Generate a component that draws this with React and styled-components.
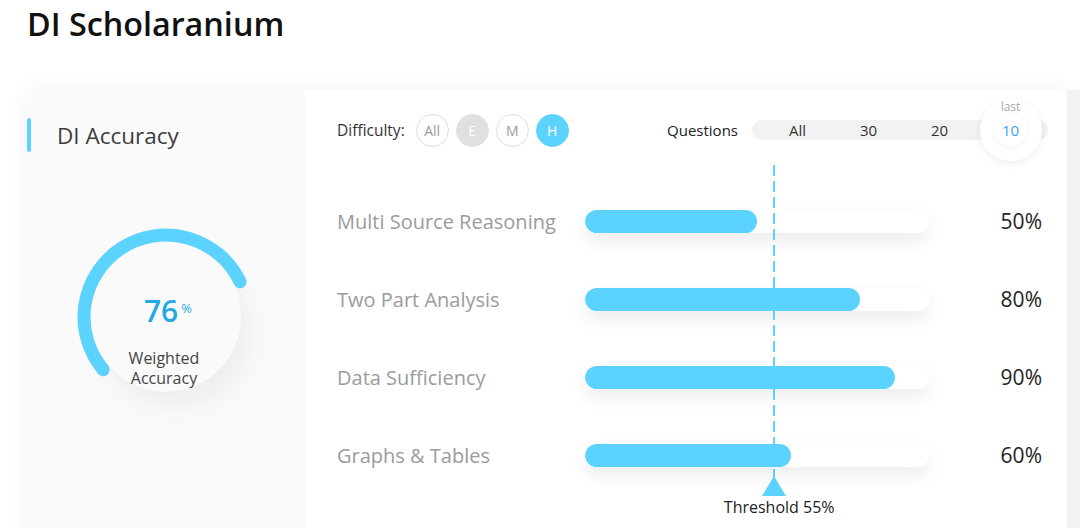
import React from 'react'
import styled, { createGlobalStyle } from 'styled-components'

const GlobalStyle = createGlobalStyle`
  body {
    margin: 0;
    background: #ffffff;
    font-family: 'Open Sans', 'Noto Sans', sans-serif;
    overflow: hidden;
  }
`

const BLUE = '#5cd3ff'
const DEEP_BLUE = '#27a8e6'

const Page = styled.div`
  width: 1080px;
  height: 528px;
  overflow: hidden;
`

const Heading = styled.h1`
  margin: 0;
  padding: 1px 0 0 27px;
  height: 90px;
  box-sizing: border-box;
  font-size: 32.3px;
  font-weight: 600;
  color: #111;
`

const Deck = styled.div`
  display: flex;
  padding-left: 27px;
`

const Card = styled.div`
  display: flex;
  width: 1040px;
  height: 460px;
  border-radius: 12px;
  overflow: hidden;
  background: #fff;
  box-shadow: 0 0 24px rgba(0, 0, 0, 0.06);
  flex-shrink: 0;
`

const NextCard = styled.div`
  width: 300px;
  height: 460px;
  background: #f2f2f2;
  flex-shrink: 0;
`

const LeftPanel = styled.div`
  width: 278px;
  background: #fafafa;
  display: flex;
  flex-direction: column;
  align-items: center;
  padding-top: 28px;
  box-sizing: border-box;
`

const PanelTitle = styled.div`
  align-self: stretch;
  display: flex;
  align-items: center;
  height: 34px;
  font-size: 22.5px;
  color: #3d3d3d;
  &::before {
    content: '';
    width: 4px;
    height: 34px;
    border-radius: 2px;
    background: ${BLUE};
    margin-right: 26px;
  }
`

const GaugeWrap = styled.div`
  position: relative;
  width: 190px;
  height: 190px;
  margin-top: 70px;
  display: flex;
  align-items: flex-start;
  justify-content: center;
`

const GaugeDisc = styled.div`
  position: absolute;
  left: 20px;
  top: 20px;
  width: 150px;
  height: 150px;
  border-radius: 50%;
  background: #fafafa;
  box-shadow: 10px 16px 28px rgba(0, 0, 0, 0.05), -4px -4px 16px rgba(0, 0, 0, 0.02);
`

const GaugeSvg = styled.svg`
  position: absolute;
  inset: 0;
`

const GaugeText = styled.div`
  position: relative;
  display: flex;
  flex-direction: column;
  align-items: center;
  padding-top: 74px;
  margin-left: -4px;
`

const Value = styled.div`
  font-size: 30px;
  font-weight: 600;
  color: ${DEEP_BLUE};
  line-height: 30px;
  margin-left: 8px;
  sup {
    font-size: 13px;
    font-weight: 400;
    vertical-align: top;
    position: relative;
    top: -3px;
    margin-left: 3px;
  }
`

const Caption = styled.div`
  margin-top: 22px;
  font-size: 16px;
  line-height: 20px;
  color: #444;
  text-align: center;
`

const RightPanel = styled.div`
  flex: 1;
  padding: 23px 25px 0 32px;
  box-sizing: border-box;
`

const Toolbar = styled.div`
  display: flex;
  align-items: center;
  justify-content: space-between;
  height: 34px;
  margin-right: -6px;
`

const Group = styled.div`
  display: flex;
  align-items: center;
`

const ToolLabel = styled.span`
  font-size: ${(p) => p.size}px;
  color: ${(p) => (p.dark ? '#222' : '#333')};
  margin-right: ${(p) => p.gap}px;
`

const Pill = styled.div`
  width: 33px;
  height: 33px;
  box-sizing: border-box;
  border-radius: 50%;
  display: flex;
  align-items: center;
  justify-content: center;
  font-size: 14px;
  margin-right: 7px;
  border: 1px solid ${(p) => (p.bg ? p.bg : '#dddddd')};
  background: ${(p) => p.bg || '#fff'};
  color: ${(p) => (p.bg ? '#fff' : '#9a9a9a')};
`

const Segments = styled.div`
  display: flex;
  height: 20px;
  width: 296px;
  box-sizing: border-box;
  padding: 0 2px 0 10px;
  border-radius: 10px;
  background: #f2f2f2;
`

const Segment = styled.div`
  position: relative;
  width: 71px;
  display: flex;
  align-items: center;
  justify-content: center;
  font-size: 15px;
  color: ${(p) => (p.active ? '#3aa6ee' : '#333')};
`

const Halo = styled.div`
  position: absolute;
  left: 50%;
  top: 50%;
  width: 62px;
  height: 62px;
  margin: -31px 0 0 -31px;
  border-radius: 50%;
  background: #fff;
  box-shadow: 0 2px 10px rgba(0, 0, 0, 0.07);
  &::after {
    content: '';
    position: absolute;
    left: 15px;
    top: 15px;
    width: 32px;
    height: 32px;
    border-radius: 50%;
    background: #fff;
    box-shadow: 0 1px 6px rgba(0, 0, 0, 0.06);
  }
`

const SegText = styled.span`
  position: relative;
  z-index: 1;
`

const LastTag = styled.span`
  position: absolute;
  z-index: 1;
  top: -22px;
  font-size: 12px;
  color: #a8a8a8;
`

const Chart = styled.div`
  position: relative;
  margin-top: 18px;
  padding-top: 17px;
`

const Row = styled.div`
  display: grid;
  grid-template-columns: 248px 344px 1fr;
  align-items: center;
  height: 78px;
`

const RowLabel = styled.div`
  font-size: 20px;
  color: #9b9b9b;
`

const Track = styled.div`
  height: 23px;
  border-radius: 12px;
  background: #fff;
  box-shadow: 0 8px 18px rgba(0, 0, 0, 0.08);
  overflow: hidden;
`

const Fill = styled.div`
  height: 100%;
  border-radius: 12px;
  background: ${BLUE};
`

const Percent = styled.div`
  text-align: right;
  font-size: 21px;
  color: #222;
`

const Threshold = styled.div`
  position: absolute;
  top: 0;
  height: 313px;
  width: 2px;
  margin-left: -1px;
  background: repeating-linear-gradient(to bottom, ${BLUE} 0 11px, transparent 11px 16px);
  pointer-events: none;
`

const Marker = styled.div`
  position: absolute;
  top: 311px;
  width: 0;
  display: flex;
  flex-direction: column;
  align-items: center;
`

const Triangle = styled.div`
  width: 0;
  height: 0;
  border-left: 12px solid transparent;
  border-right: 12px solid transparent;
  border-bottom: 20px solid ${BLUE};
`

const MarkerText = styled.div`
  white-space: nowrap;
  font-size: 16px;
  color: #222;
  margin-top: 0;
  margin-left: 10px;
`

const rows = [
  { name: 'Multi Source Reasoning', value: 50 },
  { name: 'Two Part Analysis', value: 80 },
  { name: 'Data Sufficiency', value: 90 },
  { name: 'Graphs & Tables', value: 60 },
]

const difficulty = [
  { t: 'All' },
  { t: 'E', bg: '#e0e0e0' },
  { t: 'M' },
  { t: 'H', bg: BLUE },
]

const questions = ['All', '30', '20', '10']

function arcPath(cx, cy, r, a0, a1) {
  // angles in degrees, 0 = east, counter-clockwise positive (y up)
  const p = (a) => [cx + r * Math.cos((a * Math.PI) / 180), cy - r * Math.sin((a * Math.PI) / 180)]
  const [x0, y0] = p(a0)
  const [x1, y1] = p(a1)
  const large = Math.abs(a0 - a1) > 180 ? 1 : 0
  return `M ${x0} ${y0} A ${r} ${r} 0 ${large} 1 ${x1} ${y1}`
}

function Gauge({ value }) {
  const start = 220
  const end = start - (256 * value) / 100
  return (
    <GaugeWrap>
      <GaugeDisc />
      <GaugeSvg width="190" height="190" viewBox="0 0 190 190">
        <path d={arcPath(95, 95, 82, start, end)} fill="none" stroke={BLUE} strokeWidth="13" strokeLinecap="round" />
      </GaugeSvg>
      <GaugeText>
        <Value>
          {value}
          <sup>%</sup>
        </Value>
        <Caption>
          Weighted
          <br />
          Accuracy
        </Caption>
      </GaugeText>
    </GaugeWrap>
  )
}

export default function App() {
  const threshold = 55
  const thresholdX = 248 + (344 * threshold) / 100
  return (
    <Page>
      <GlobalStyle />
      <Heading>DI Scholaranium</Heading>
      <Deck>
        <Card>
          <LeftPanel>
            <PanelTitle>DI Accuracy</PanelTitle>
            <Gauge value={76} />
          </LeftPanel>
          <RightPanel>
            <Toolbar>
              <Group>
                <ToolLabel size={15.5} gap={11}>Difficulty:</ToolLabel>
                {difficulty.map((d) => (
                  <Pill key={d.t} bg={d.bg}>
                    {d.t}
                  </Pill>
                ))}
              </Group>
              <Group>
                <ToolLabel dark size={15} gap={14}>Questions</ToolLabel>
                <Segments>
                  {questions.map((q) => {
                    const active = q === '10'
                    return (
                      <Segment key={q} active={active}>
                        {active && <Halo />}
                        {active && <LastTag>last</LastTag>}
                        <SegText>{q}</SegText>
                      </Segment>
                    )
                  })}
                </Segments>
              </Group>
            </Toolbar>
            <Chart>
              {rows.map((r) => (
                <Row key={r.name}>
                  <RowLabel>{r.name}</RowLabel>
                  <Track>
                    <Fill style={{ width: `${r.value}%` }} />
                  </Track>
                  <Percent>{r.value}%</Percent>
                </Row>
              ))}
              <Threshold style={{ left: thresholdX }} />
              <Marker style={{ left: thresholdX }}>
                <Triangle />
                <MarkerText>Threshold {threshold}%</MarkerText>
              </Marker>
            </Chart>
          </RightPanel>
        </Card>
        <NextCard />
      </Deck>
    </Page>
  )
}
